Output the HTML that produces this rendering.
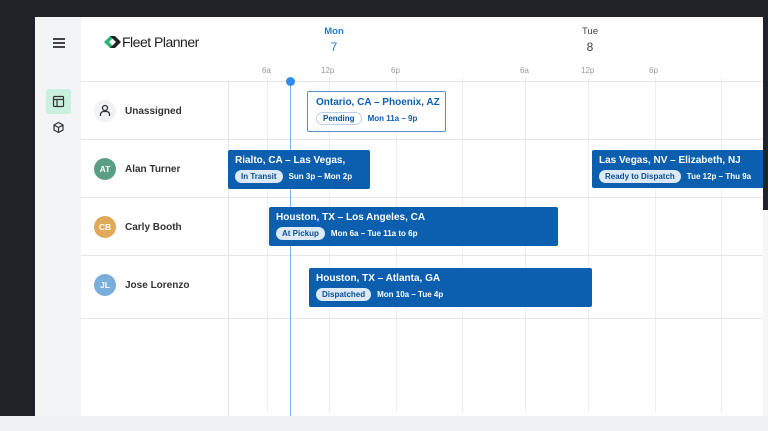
<!DOCTYPE html>
<html><head><style>
*{margin:0;padding:0;box-sizing:border-box}
body{width:768px;height:431px;overflow:hidden;background:#f0f1f2;font-family:"Liberation Sans",sans-serif;position:relative}
.a{position:absolute}
.vl{position:absolute;top:81px;height:335px;width:1px;background:#eceef0}
.hl{position:absolute;left:81px;width:682px;height:1px;background:#e3e5e8}
.name{position:absolute;left:125px;font-size:10px;font-weight:bold;color:#333}
.av{position:absolute;left:94px;width:22px;height:22px;border-radius:50%;color:#fff;font-size:8.5px;font-weight:bold;text-align:center;line-height:22px}
.bar{position:absolute;background:#0b5fae;border-radius:2px;color:#fff;padding:5px 0 0 7px}
.bar .t{font-size:10px;font-weight:bold;white-space:nowrap}
.bar .s{font-size:8px;font-weight:bold;margin-top:4px;white-space:nowrap}
.pill{display:inline-block;background:#dce9f7;color:#0b4f93;border-radius:8px;padding:2px 6px;margin-right:6px}
.tk{position:absolute;top:66px;font-size:8px;color:#999}
</style></head><body>
<div class="a" style="left:0;top:0;width:768px;height:17px;background:#202327"></div>
<div class="a" style="left:0;top:0;width:35px;height:416px;background:#202327"></div>
<div class="a" style="left:763px;top:0;width:5px;height:210px;background:#202327"></div>
<div class="a" style="left:763px;top:210px;width:5px;height:206px;background:#f7f7f7"></div>
<div class="a" style="left:35px;top:17px;width:728px;height:399px;background:#fff;border-top-left-radius:8px;overflow:hidden">
 <div class="a" style="left:0;top:0;width:46px;height:399px;background:#f3f4f5"></div>
</div>
<div class="a" style="left:53px;top:38px;width:12px;height:2px;background:#444;box-shadow:0 4px 0 #444,0 8px 0 #444"></div>
<div class="a" style="left:46px;top:89px;width:25px;height:25px;background:#c8f0dc;border-radius:3px"></div>
<svg class="a" style="left:52px;top:95px" width="13" height="13" viewBox="0 0 13 13" fill="none" stroke="#333" stroke-width="1.2"><rect x="1.5" y="1.5" width="10" height="10" rx="1"/><path d="M1.5 4.5h10M5 4.5v7"/></svg>
<svg class="a" style="left:52px;top:121px" width="13" height="13" viewBox="0 0 13 13" fill="none" stroke="#333" stroke-width="1.2"><path d="M6.5 1.5l4.5 2.5v5l-4.5 2.5-4.5-2.5v-5z M2 4l4.5 2.5L11 4 M6.5 6.5v5"/></svg>
<svg class="a" style="left:104px;top:35px" width="17" height="14" viewBox="0 0 17 14"><path d="M0 7l6-6h5l-6 6 6 6h-5z" fill="#2bb673"/><path d="M6 1h5l6 6-6 6h-5l6-6z" fill="#222"/></svg>
<div class="a" style="left:122px;top:34px;font-size:14px;color:#222;letter-spacing:-0.5px">Fleet Planner</div>
<div class="a" style="left:322px;top:26px;font-size:9.5px;color:#2a7bc4;width:24px;text-align:center;font-weight:bold">Mon</div>
<div class="a" style="left:322px;top:40px;font-size:12px;color:#2a7bc4;width:24px;text-align:center">7</div>
<div class="a" style="left:578px;top:26px;font-size:9.5px;color:#444;width:24px;text-align:center">Tue</div>
<div class="a" style="left:578px;top:40px;font-size:12px;color:#444;width:24px;text-align:center">8</div>
<div class="tk" style="left:262px">6a</div><div class="tk" style="left:321px">12p</div><div class="tk" style="left:391px">6p</div>
<div class="tk" style="left:520px">6a</div><div class="tk" style="left:581px">12p</div><div class="tk" style="left:649px">6p</div>
<div class="vl" style="left:228px;top:81px;background:#e3e5e8"></div>
<div class="vl" style="left:267px;top:77px"></div><div class="vl" style="left:329px;top:77px"></div><div class="vl" style="left:396px;top:77px"></div>
<div class="vl" style="left:462px;top:77px"></div><div class="vl" style="left:525px;top:77px"></div><div class="vl" style="left:588px;top:77px"></div>
<div class="vl" style="left:655px;top:77px"></div><div class="vl" style="left:721px;top:77px"></div>
<div class="hl" style="top:81px"></div><div class="hl" style="top:139px"></div><div class="hl" style="top:197px"></div><div class="hl" style="top:255px"></div><div class="hl" style="top:318px"></div>
<div class="a" style="left:94px;top:100px;width:22px;height:22px;border-radius:50%;background:#f1f2f3"></div>
<svg class="a" style="left:99px;top:104px" width="12" height="13" viewBox="0 0 12 13" fill="none" stroke="#333" stroke-width="1.3"><circle cx="6" cy="4" r="2.5"/><path d="M1.5 12v-1.5a3 3 0 0 1 3-3h3a3 3 0 0 1 3 3V12"/></svg>
<div class="name" style="top:106px">Unassigned</div>
<div class="av" style="top:158px;background:#5a9e84">AT</div><div class="name" style="top:164px">Alan Turner</div>
<div class="av" style="top:216px;background:#e0a95a">CB</div><div class="name" style="top:222px">Carly Booth</div>
<div class="av" style="top:274px;background:#79aedb">JL</div><div class="name" style="top:280px">Jose Lorenzo</div>
<div class="a" style="left:290px;top:81px;width:1px;height:335px;background:#7fb4ea"></div>
<div class="a" style="left:286px;top:77px;width:9px;height:9px;border-radius:50%;background:#2b8ef0"></div>
<div class="bar" style="left:307px;top:91px;width:139px;height:41px;background:#fff;border:1px solid #5b8fc4;color:#0b5fae;padding:5px 0 0 8px"><div class="t">Ontario, CA – Phoenix, AZ</div><div class="s"><span class="pill" style="background:#fff;border:1px solid #b8d2ee;padding:1px 6px">Pending</span>Mon 11a – 9p</div></div>
<div class="bar" style="left:228px;top:150px;width:142px;height:39px"><div class="t">Rialto, CA – Las Vegas,</div><div class="s"><span class="pill">In Transit</span>Sun 3p – Mon 2p</div></div>
<div class="bar" style="left:592px;top:150px;width:171px;height:38px;border-radius:2px 0 0 2px"><div class="t">Las Vegas, NV – Elizabeth, NJ</div><div class="s"><span class="pill">Ready to Dispatch</span>Tue 12p – Thu 9a</div></div>
<div class="bar" style="left:269px;top:207px;width:289px;height:39px"><div class="t">Houston, TX – Los Angeles, CA</div><div class="s"><span class="pill">At Pickup</span>Mon 6a – Tue 11a to 6p</div></div>
<div class="bar" style="left:309px;top:268px;width:283px;height:39px"><div class="t">Houston, TX – Atlanta, GA</div><div class="s"><span class="pill">Dispatched</span>Mon 10a – Tue 4p</div></div>
</body></html>
